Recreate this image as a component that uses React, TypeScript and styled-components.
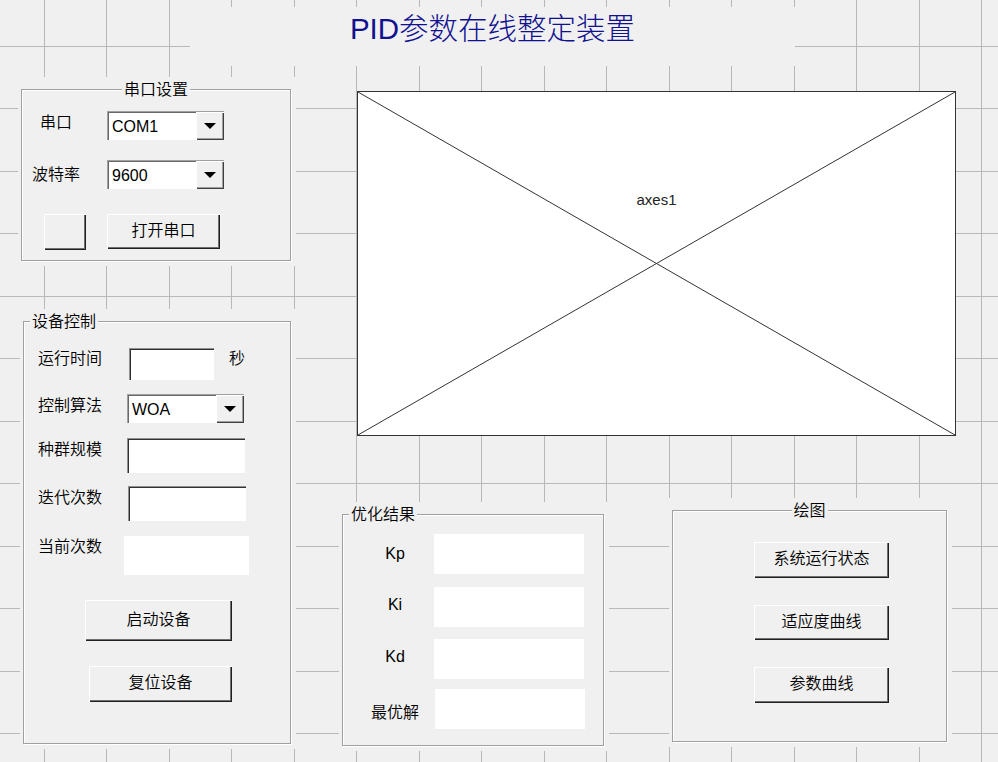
import React from "react";
import styled, { createGlobalStyle } from "styled-components";

const FONT = `"Liberation Sans", "Noto Sans CJK SC", sans-serif`;

const GlobalStyle = createGlobalStyle`
  html, body {
    margin: 0;
    padding: 0;
    background: #f0f0f0;
  }
  body {
    font-family: ${FONT};
  }
`;

// GUIDE layout canvas with its grid
const Canvas = styled.div`
  width: 998px;
  height: 762px;
  overflow: hidden;
  display: flex;
  flex-direction: column;
  align-items: flex-start;
  background-color: #f0f0f0;
  background-image: repeating-linear-gradient(
      to right,
      #b8b8b8 0 1px,
      transparent 1px 62.5px
    ),
    repeating-linear-gradient(to bottom, #b8b8b8 0 1px, transparent 1px 62.5px);
  background-repeat: no-repeat;
  background-position: 44px 0, 0 46px;
  font-family: ${FONT};
  font-weight: 350;
  color: #000;
`;

const TitleBox = styled.div`
  margin: 7px 0 0 190px;
  width: 605px;
  height: 59px;
  background: #f0f0f0;
  text-align: center;
  font-size: 29.5px;
  font-weight: 300;
  line-height: 44px;
  color: #101090;
  white-space: nowrap;
`;

const Body = styled.div`
  display: flex;
  align-items: flex-start;
`;

const LeftColumn = styled.div`
  width: 296px;
  flex-shrink: 0;
  display: flex;
  flex-direction: column;
  align-items: flex-start;
`;

const RightColumn = styled.div`
  display: flex;
  flex-direction: column;
  align-items: flex-start;
`;

const BottomRow = styled.div`
  display: flex;
  align-items: flex-start;
`;

const PanelShell = styled.div<{ $mt: number; $ml: number }>`
  margin: ${(p) => p.$mt}px 0 0 ${(p) => p.$ml}px;
  padding: 12px 5px 5px 3px;
  background: #f0f0f0;
  flex-shrink: 0;
`;

const PanelFrame = styled.div<{ $w: number; $h: number }>`
  position: relative;
  box-sizing: border-box;
  width: ${(p) => p.$w}px;
  height: ${(p) => p.$h}px;
  border: 1px solid #a0a0a0;
  box-shadow: 1px 1px 0 #fff, inset 1px 1px 0 #fff;
  display: flex;
  flex-direction: column;
  align-items: flex-start;
`;

const PanelTitle = styled.span<{ $center?: boolean }>`
  position: absolute;
  top: -10px;
  ${(p) =>
    p.$center ? "left: 50%; transform: translateX(-50%);" : "left: 6px;"}
  padding: 0 2px;
  background: #f0f0f0;
  font-size: 16px;
  line-height: 20px;
  white-space: nowrap;
`;

const Row = styled.div<{ $mt: number; $h: number }>`
  display: flex;
  align-items: flex-start;
  margin-top: ${(p) => p.$mt}px;
  height: ${(p) => p.$h}px;
`;

const Label = styled.span<{ $w: number; $ml?: number; $mt?: number }>`
  width: ${(p) => p.$w}px;
  margin-left: ${(p) => p.$ml ?? 0}px;
  margin-top: ${(p) => p.$mt ?? 0}px;
  text-align: center;
  font-size: 16px;
  line-height: 20px;
  white-space: nowrap;
  flex-shrink: 0;
`;

const EditBox = styled.div<{ $w: number; $h: number; $ml: number }>`
  box-sizing: border-box;
  width: ${(p) => p.$w}px;
  height: ${(p) => p.$h}px;
  margin-left: ${(p) => p.$ml}px;
  flex-shrink: 0;
  background: #fff;
  border-top: 1px solid #909090;
  border-left: 1px solid #909090;
  box-shadow: inset 1px 1px 0 #303030;
`;

const StaticBox = styled.div<{ $w: number; $h: number; $ml: number }>`
  width: ${(p) => p.$w}px;
  height: ${(p) => p.$h}px;
  margin-left: ${(p) => p.$ml}px;
  flex-shrink: 0;
  background: #fff;
`;

const Popup = styled.div<{ $w: number; $h: number; $ml: number }>`
  box-sizing: border-box;
  display: flex;
  width: ${(p) => p.$w}px;
  height: ${(p) => p.$h}px;
  margin-left: ${(p) => p.$ml}px;
  flex-shrink: 0;
  background: #fff;
  border-top: 1px solid #a0a0a0;
  border-left: 1px solid #a0a0a0;
  box-shadow: inset 1px 1px 0 #696969;
`;

const PopupText = styled.span`
  flex: 1;
  align-self: center;
  padding: 1px 0 0 4px;
  font-size: 16px;
  line-height: 20px;
`;

const PopupArrow = styled.span`
  width: 28px;
  align-self: stretch;
  display: flex;
  align-items: center;
  justify-content: center;
  background: #f0f0f0;
  box-shadow: inset 1px 1px 0 #fff, inset -1px -1px 0 #404040,
    inset -2px -2px 0 #a0a0a0;

  &::after {
    content: "";
    width: 0;
    height: 0;
    border-left: 6.5px solid transparent;
    border-right: 6.5px solid transparent;
    border-top: 6px solid #000;
  }
`;

const PushButton = styled.button<{
  $w: number;
  $h: number;
  $ml: number;
  $mt?: number;
}>`
  box-sizing: border-box;
  width: ${(p) => p.$w}px;
  height: ${(p) => p.$h}px;
  margin: ${(p) => p.$mt ?? 0}px 0 0 ${(p) => p.$ml}px;
  padding: 0 0 2px 0;
  flex-shrink: 0;
  border: none;
  background: #f0f0f0;
  box-shadow: inset 1px 1px 0 #fff, inset -1px -1px 0 #202020,
    inset -2px -2px 0 #707070;
  font-family: ${FONT};
  font-size: 16px;
  font-weight: 350;
  line-height: 20px;
  color: #000;
`;

const Axes = styled.div`
  position: relative;
  box-sizing: border-box;
  width: 599px;
  height: 345px;
  margin: 25px 0 0 61px;
  background: #fff;
  border: 1px solid #333;
  display: flex;
  justify-content: center;
`;

const AxesCross = styled.svg`
  position: absolute;
  left: 0;
  top: 0;
`;

const AxesName = styled.span`
  position: relative;
  margin-top: 98px;
  font-size: 15px;
  line-height: 20px;
  color: #222;
`;

const Combo = ({
  value,
  w,
  h,
  ml,
}: {
  value: string;
  w: number;
  h: number;
  ml: number;
}) => (
  <Popup $w={w} $h={h} $ml={ml}>
    <PopupText>{value}</PopupText>
    <PopupArrow />
  </Popup>
);

const resultRows = [
  { name: "Kp", mt: 19, lt: 10, ml: 4 },
  { name: "Ki", mt: 13, lt: 8, ml: 4 },
  { name: "Kd", mt: 12, lt: 8, ml: 4 },
  { name: "最优解", mt: 10, lt: 14, ml: 5 },
];

const plotButtons = [
  { text: "系统运行状态", mt: 31, h: 36 },
  { text: "适应度曲线", mt: 27, h: 35 },
  { text: "参数曲线", mt: 27, h: 36 },
];

export default function App() {
  return (
    <>
      <GlobalStyle />
      <Canvas>
        <TitleBox>PID参数在线整定装置</TitleBox>
        <Body>
          <LeftColumn>
            <PanelShell $mt={11} $ml={18}>
              <PanelFrame $w={270} $h={172}>
                <PanelTitle $center>串口设置</PanelTitle>
                <Row $mt={21} $h={29}>
                  <Label $w={64} $ml={2} $mt={2}>
                    串口
                  </Label>
                  <Combo value="COM1" w={117} h={29} ml={19} />
                </Row>
                <Row $mt={20} $h={29}>
                  <Label $w={64} $ml={2} $mt={5}>
                    波特率
                  </Label>
                  <Combo value="9600" w={117} h={29} ml={19} />
                </Row>
                <Row $mt={25} $h={36}>
                  <PushButton $w={42} $h={36} $ml={22} />
                  <PushButton $w={113} $h={35} $ml={21}>
                    打开串口
                  </PushButton>
                </Row>
              </PanelFrame>
            </PanelShell>

            <PanelShell $mt={43} $ml={20}>
              <PanelFrame $w={268} $h={423}>
                <PanelTitle>设备控制</PanelTitle>
                <Row $mt={26} $h={32}>
                  <Label $w={72} $ml={10} $mt={1}>
                    运行时间
                  </Label>
                  <EditBox $w={85} $h={32} $ml={23} />
                  <Label $w={16} $ml={15} $mt={1}>
                    秒
                  </Label>
                </Row>
                <Row $mt={14} $h={29}>
                  <Label $w={72} $ml={10} $mt={2}>
                    控制算法
                  </Label>
                  <Combo value="WOA" w={117} h={29} ml={21} />
                </Row>
                <Row $mt={15} $h={35}>
                  <Label $w={72} $ml={10} $mt={2}>
                    种群规模
                  </Label>
                  <EditBox $w={118} $h={35} $ml={21} />
                </Row>
                <Row $mt={13} $h={35}>
                  <Label $w={72} $ml={10} $mt={2}>
                    迭代次数
                  </Label>
                  <EditBox $w={118} $h={35} $ml={22} />
                </Row>
                <Row $mt={15} $h={39}>
                  <Label $w={72} $ml={10} $mt={1}>
                    当前次数
                  </Label>
                  <StaticBox $w={125} $h={39} $ml={18} />
                </Row>
                <PushButton $w={147} $h={41} $ml={61} $mt={25}>
                  启动设备
                </PushButton>
                <PushButton $w={143} $h={36} $ml={65} $mt={25}>
                  复位设备
                </PushButton>
              </PanelFrame>
            </PanelShell>
          </LeftColumn>

          <RightColumn>
            <Axes>
              <AxesCross width={597} height={343} viewBox="0 0 597 343">
                <line x1={0} y1={0} x2={597} y2={343} stroke="#333" strokeWidth={1} />
                <line x1={0} y1={343} x2={597} y2={0} stroke="#333" strokeWidth={1} />
              </AxesCross>
              <AxesName>axes1</AxesName>
            </Axes>

            <BottomRow>
              <PanelShell $mt={66} $ml={43}>
                <PanelFrame $w={262} $h={232}>
                  <PanelTitle>优化结果</PanelTitle>
                  {resultRows.map((r) => (
                    <Row key={r.name} $mt={r.mt} $h={40}>
                      <Label $w={70} $ml={17} $mt={r.lt}>
                        {r.name}
                      </Label>
                      <StaticBox $w={150} $h={40} $ml={r.ml} />
                    </Row>
                  ))}
                </PanelFrame>
              </PanelShell>

              <PanelShell $mt={62} $ml={60}>
                <PanelFrame $w={275} $h={232}>
                  <PanelTitle $center>绘图</PanelTitle>
                  {plotButtons.map((b) => (
                    <PushButton key={b.text} $w={135} $h={b.h} $ml={81} $mt={b.mt}>
                      {b.text}
                    </PushButton>
                  ))}
                </PanelFrame>
              </PanelShell>
            </BottomRow>
          </RightColumn>
        </Body>
      </Canvas>
    </>
  );
}
